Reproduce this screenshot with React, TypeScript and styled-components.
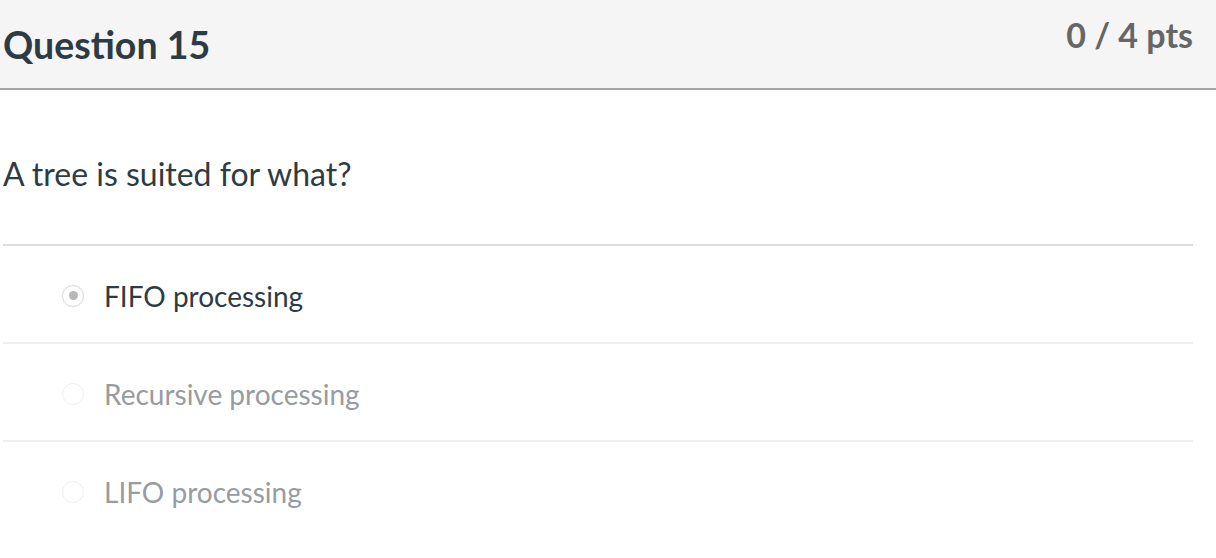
import styled, { createGlobalStyle } from "styled-components";

const GlobalStyle = createGlobalStyle`
  body {
    margin: 0;
    background: #ffffff;
    font-family: Lato, "Open Sans", sans-serif;
  }
`;

const Page = styled.div`
  width: 1216px;
  height: 558px;
  overflow: hidden;
`;

const Header = styled.div`
  height: 88px;
  background: #f5f5f5;
  border-bottom: 2px solid #a5a5a5;
  display: flex;
  justify-content: space-between;
  align-items: flex-start;
  padding: 0 23px 0 3px;
`;

const Title = styled.h2`
  margin: 22px 0 0;
  font-size: 37.5px;
  font-weight: 700;
  color: #2d3b45;
`;

const Points = styled.div`
  margin-top: 14px;
  font-size: 34px;
  font-weight: 700;
  color: #666666;
`;

const Body = styled.div`
  padding: 0 23px 0 3px;
`;

const QuestionText = styled.p`
  margin: 0;
  padding: 64px 0 51px;
  font-size: 32px;
  color: #2d3b45;
  border-bottom: 2px solid #dddddd;
`;

const Answer = styled.div<{ $last?: boolean }>`
  height: 93px;
  padding-top: 3px;
  display: flex;
  align-items: center;
  padding-left: 59px;
  gap: 20px;
  border-bottom: ${(p) => (p.$last ? "none" : "2px solid #eeeeee")};
`;

const Radio = styled.span<{ $checked?: boolean }>`
  width: 22px;
  height: 22px;
  flex: none;
  border-radius: 50%;
  box-sizing: border-box;
  border: 1px solid ${(p) => (p.$checked ? "#dadada" : "#efefef")};
  box-shadow: ${(p) => (p.$checked ? "0 0 2px rgba(0,0,0,0.08)" : "none")};
  display: flex;
  align-items: center;
  justify-content: center;
  &::after {
    content: "";
    width: 9px;
    height: 9px;
    border-radius: 50%;
    background: ${(p) => (p.$checked ? "#b8b8b8" : "transparent")};
  }
`;

const AnswerText = styled.span<{ $dim?: boolean }>`
  font-size: 28px;
  color: ${(p) => (p.$dim ? "#979ca0" : "#2d3b45")};
`;

const answers = [
  { text: "FIFO processing", checked: true },
  { text: "Recursive processing", checked: false },
  { text: "LIFO processing", checked: false },
];

export default function App() {
  return (
    <Page>
      <GlobalStyle />
      <Header>
        <Title>Question 15</Title>
        <Points>0 / 4 pts</Points>
      </Header>
      <Body>
        <QuestionText>A tree is suited for what?</QuestionText>
        {answers.map((a, i) => (
          <Answer key={a.text} $last={i === answers.length - 1}>
            <Radio $checked={a.checked} />
            <AnswerText $dim={!a.checked}>{a.text}</AnswerText>
          </Answer>
        ))}
      </Body>
    </Page>
  );
}
